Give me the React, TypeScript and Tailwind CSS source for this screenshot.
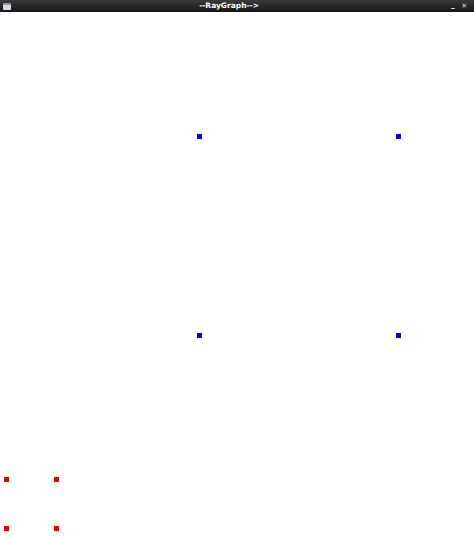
import React from "react";

const blue: [number, number][] = [
  [198, 134],
  [397, 134],
  [198, 333],
  [397, 333],
];
const red: [number, number][] = [
  [4, 477],
  [54, 477],
  [4, 526],
  [54, 526],
];

export default function App() {
  return (
    <div className="w-[474px] h-[536px] flex flex-col bg-white overflow-hidden" style={{ fontFamily: '"DejaVu Sans", "Liberation Sans", sans-serif' }}>
      <div className="h-[12px] flex items-center bg-gradient-to-b from-[#3a3a3a] to-[#161616] px-[3px] shrink-0">
        <div className="w-[8px] h-[7px] bg-[#d8dce4] border-t-[2px] border-[#8c96b4] rounded-[1px]" />
        <div className="flex-1 text-center text-white font-bold text-[7.5px] leading-none pr-[4px]">--RayGraph--&gt;</div>
        <div className="flex items-center gap-[6px] pr-[4px]">
          <div className="w-[4px] h-[1px] bg-[#cccccc] mt-[4px]" />
          <div className="text-[#dddddd] text-[7px] font-bold leading-none">✕</div>
        </div>
      </div>
      <div className="relative flex-1 bg-white">
        {blue.map(([x, y], i) => (
          <div
            key={"b" + i}
            className="absolute w-[5px] h-[5px] bg-[#0000e0]"
            style={{ left: x - 1, top: y - 12 - 1 + 1 }}
          />
        ))}
        {red.map(([x, y], i) => (
          <div
            key={"r" + i}
            className="absolute w-[5px] h-[5px] bg-[#e00000]"
            style={{ left: x - 1 + 1, top: y - 12 }}
          />
        ))}
      </div>
    </div>
  );
}
